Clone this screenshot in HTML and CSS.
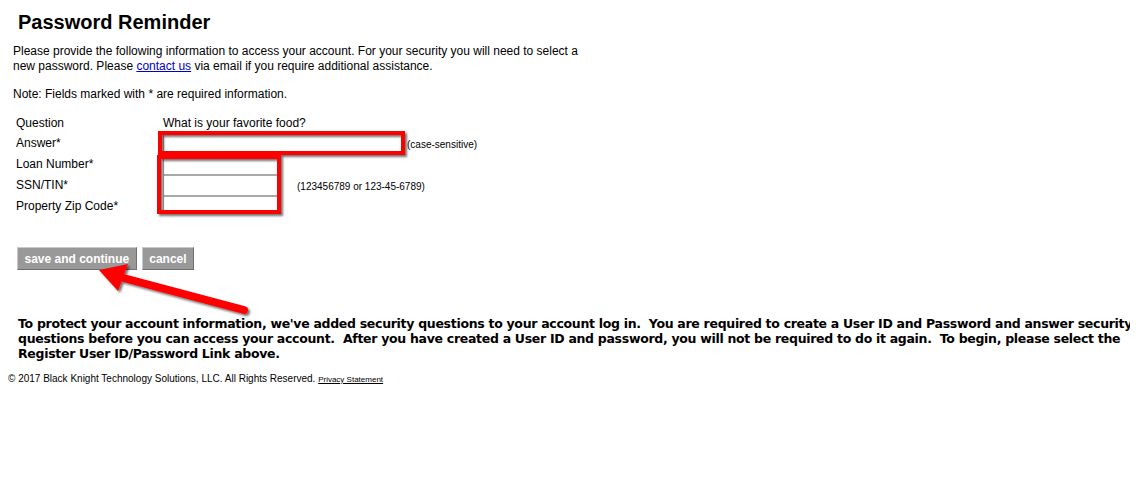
FILE: index.html
```html
<!DOCTYPE html>
<html lang="en">
<head>
<meta charset="utf-8">
<title>Password Reminder</title>
<link rel="stylesheet" href="styles.css">
</head>
<body>
<h1 class="title">Password Reminder</h1>
<p class="intro">Please provide the following information to access your account. For your security you will need to select a new password. Please <a href="#" class="link">contact us</a> via email if you require additional assistance.</p>
<p class="note">Note: Fields marked with * are required information.</p>

<div class="form">
  <div class="label">Question</div>
  <div class="value">What is your favorite food?</div>

  <div class="label">Answer*</div>
  <div class="value"><span class="input wide"></span><span class="hint hint-near">(case-sensitive)</span></div>

  <div class="label">Loan Number*</div>
  <div class="value"><span class="input short"></span></div>

  <div class="label">SSN/TIN*</div>
  <div class="value"><span class="input short"></span><span class="hint hint-far">(123456789 or 123-45-6789)</span></div>

  <div class="label">Property Zip Code*</div>
  <div class="value value-top"><span class="input short last"></span></div>
</div>

<div class="buttons">
  <button class="btn">save and continue</button>
  <button class="btn">cancel</button>
</div>

<p class="notice">To protect your account information, we've added security questions to your account log in.&nbsp; You are required to create a User ID and Password and answer security questions before you can access your account.&nbsp; After you have created a User ID and password, you will not be required to do it again.&nbsp; To begin, please select the Register User ID/Password Link above.</p>

<p class="footer">&copy; 2017 Black Knight Technology Solutions, LLC. All Rights Reserved. <a href="#" class="privacy">Privacy Statement</a></p>

<svg class="annotations" width="1138" height="498" viewBox="0 0 1138 498" aria-hidden="true">
  <defs>
    <filter id="sh" x="-10%" y="-10%" width="130%" height="140%">
      <feDropShadow dx="2" dy="2" stdDeviation="1" flood-color="#000" flood-opacity="0.55"/>
    </filter>
  </defs>
  <g filter="url(#sh)" fill="none" stroke="#ff0000" stroke-width="4">
    <rect x="160" y="133" width="243" height="20"/>
    <rect x="159" y="157" width="120" height="55"/>
  </g>
  <g filter="url(#sh)">
    <line x1="244" y1="310" x2="116" y2="276" stroke="#ff0000" stroke-width="8" stroke-linecap="round"/>
    <polygon points="99,270 128,264 118,291" fill="#ff0000"/>
  </g>
</svg>
</body>
</html>
```

FILE: styles.css
```css
html, body {
  background: #ffffff;
}
body {
  margin: 8px;
  font-family: Arial, "Liberation Sans", sans-serif;
  color: #000000;
  font-size: 12px;
}
.title {
  margin: 3px 0 0 10px;
  font-size: 20px;
  line-height: 23px;
  font-weight: bold;
}
.intro {
  margin: 10px 0 0 5px;
  width: 580px;
  line-height: 15px;
}
.link {
  color: #0000cc;
  text-decoration: underline;
}
.note {
  margin: 13px 0 0 5px;
  line-height: 15px;
}
.form {
  margin: 11px 0 0 8px;
  display: grid;
  grid-template-columns: 147px auto;
  grid-template-rows: 20px;
  grid-auto-rows: 21px;
}
.label, .value {
  display: flex;
  align-items: center;
  line-height: 15px;
}
.value-top {
  align-items: flex-start;
}
.input {
  display: block;
  box-sizing: border-box;
  background: #fff;
  border: 1px solid #a9a9a9;
}
.input.wide {
  width: 240px;
  height: 20px;
}
.input.short {
  width: 115px;
  height: 21px;
}
.input.short.last {
  height: 18px;
}
.hint {
  font-size: 10px;
}
.hint-near {
  margin-left: 4px;
  margin-top: 2px;
}
.hint-far {
  margin-left: 19px;
  margin-top: 2px;
}
.buttons {
  margin: 30px 0 0 9px;
  display: flex;
  gap: 5px;
}
.btn {
  height: 23px;
  padding: 0 6.5px;
  background: #999999;
  color: #ffffff;
  font-family: Arial, "Liberation Sans", sans-serif;
  font-size: 12px;
  font-weight: bold;
  border: 1px solid;
  border-color: #c8c8c8 #6f6f6f #6f6f6f #c8c8c8;
}
.notice {
  margin: 46px -6px 0 10px;
  font-family: Verdana, "DejaVu Sans", sans-serif;
  font-size: 12.5px;
  letter-spacing: -0.3px;
  font-weight: bold;
  line-height: 15px;
}
.footer {
  margin: 12px 0 0 0;
  font-size: 10px;
  line-height: 12px;
}
.privacy {
  color: #000;
  font-size: 8px;
  text-decoration: underline;
}
.annotations {
  position: absolute;
  top: 0;
  left: 0;
  pointer-events: none;
}
```
